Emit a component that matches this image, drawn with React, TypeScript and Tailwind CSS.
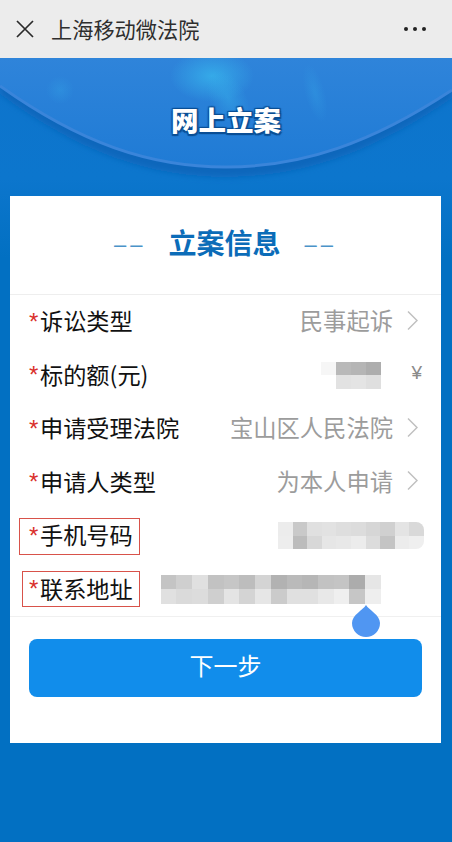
const font = "font-['Noto_Sans_CJK_SC','Noto_Sans',sans-serif]";

function Star() {
  return <span className="w-[11px] text-[#d9302c] text-[24px] leading-none font-['Liberation_Sans',sans-serif] translate-y-[1px]">*</span>;
}

function Chevron() {
  return (
    <svg width="11" height="20" viewBox="0 0 11 20" className="ml-[14px] mr-[2px] shrink-0" fill="none" stroke="#c0c0c0" strokeWidth="1.5">
      <path d="M1 1 L10 10 L1 19" />
    </svg>
  );
}

function Mosaic({ rows, className }: { rows: string[][]; className: string }) {
  return (
    <div className={"flex flex-col blur-[0.6px] " + className}>
      {rows.map((r, i) => (
        <div key={i} className="flex flex-1">
          {r.map((c, j) => (
            <div key={j} className={"flex-1 " + c} />
          ))}
        </div>
      ))}
    </div>
  );
}

function SelectRow({ label, value }: { label: string; value: string }) {
  return (
    <div className="h-[53.5px] flex items-center justify-between pl-[19px] pr-[21px]">
      <div className="flex items-center text-[#111] text-[23.2px] -translate-y-[1.5px]"><Star />{label}</div>
      <div className="flex items-center text-[#9c9c9c] text-[23.3px] -translate-y-[1.5px]">{value}<Chevron /></div>
    </div>
  );
}

export default function App() {
  return (
    <div className={"w-[452px] h-[842px] overflow-hidden flex flex-col " + font}>
      <header className="h-[58px] shrink-0 bg-[#ececec] flex items-center pl-[16px] pr-[26px]">
        <svg width="18" height="18" viewBox="0 0 18 18" fill="none" stroke="#2a2a2a" strokeWidth="1.7" className="shrink-0">
          <path d="M1 1 L17 17 M17 1 L1 17" />
        </svg>
        <div className="ml-[17px] text-[21.2px] text-[#2e2e2e] flex-1">上海移动微法院</div>
        <div className="flex gap-[5px]">
          <span className="w-[4px] h-[4px] rounded-full bg-[#222]" />
          <span className="w-[4px] h-[4px] rounded-full bg-[#222]" />
          <span className="w-[4px] h-[4px] rounded-full bg-[#222]" />
        </div>
      </header>

      <main className="relative flex-1 bg-[#0270c2] px-[10px] flex flex-col">
        <svg className="absolute left-0 top-0" width="452" height="200" viewBox="0 0 452 200">
          <defs>
            <linearGradient id="base" x1="0" y1="0" x2="0" y2="1">
              <stop offset="0" stopColor="#0e74cc" />
              <stop offset="0.6" stopColor="#0c76cd" />
              <stop offset="1" stopColor="#0270c2" />
            </linearGradient>
            <linearGradient id="dome" x1="0" y1="0" x2="0" y2="1">
              <stop offset="0" stopColor="#2f84da" />
              <stop offset="1" stopColor="#1f7bd5" />
            </linearGradient>
            <radialGradient id="glow" cx="0.5" cy="0.5" r="0.5">
              <stop offset="0" stopColor="#36aeea" stopOpacity="0.9" />
              <stop offset="1" stopColor="#36aeea" stopOpacity="0" />
            </radialGradient>
            <filter id="soft" x="-20%" y="-20%" width="140%" height="140%">
              <feGaussianBlur stdDeviation="3" />
            </filter>
          </defs>
          <rect width="452" height="200" fill="url(#base)" />
          <path d="M0 36 C80 95 150 119 226 119 C302 119 372 95 452 40 L452 0 L0 0Z" fill="#0a66bb" filter="url(#soft)" />
          <path d="M0 28 C80 85 150 109 226 109 C302 109 372 85 452 32 L452 0 L0 0Z" fill="url(#dome)" />
          <path d="M0 28 C80 85 150 109 226 109 C302 109 372 85 452 32" fill="none" stroke="#3a85da" strokeWidth="3" />
          <ellipse cx="212" cy="18" rx="42" ry="26" fill="url(#glow)" />
          <ellipse cx="228" cy="40" rx="18" ry="30" fill="url(#glow)" opacity="0.55" transform="rotate(-30 228 40)" />
          <ellipse cx="315" cy="35" rx="10" ry="30" fill="url(#glow)" opacity="0.3" transform="rotate(-15 315 35)" />
          <ellipse cx="60" cy="32" rx="14" ry="14" fill="url(#glow)" opacity="0.3" />
        </svg>

        <div className="relative h-[138px] shrink-0 flex items-center justify-center pb-[14px]">
          <span className="text-white text-[27.5px] font-black leading-none [text-shadow:0_0_2px_#0b4f95,1.5px_1.5px_1px_#0b4f95,-1px_-1px_1px_#0b4f95,1.5px_-1px_1px_#0b4f95,-1px_1.5px_1px_#0b4f95]">网上立案</span>
        </div>

        <section className="relative w-[431px] h-[547px] bg-white flex flex-col">
          <div className="h-[99px] shrink-0 border-b border-[#eeeeee] flex items-center justify-center text-[#0b6cb8]">
            <span className="text-[#4b93c9] text-[22px] leading-none tracking-[4px] font-['Liberation_Sans',sans-serif] mr-[22px]">––</span>
            <span className="text-[28px] font-bold leading-none -translate-y-[3px]">立案信息</span>
            <span className="text-[#4b93c9] text-[22px] leading-none tracking-[4px] font-['Liberation_Sans',sans-serif] ml-[24px]">––</span>
          </div>

          <SelectRow label="诉讼类型" value="民事起诉" />

          <div className="h-[53.5px] flex items-center justify-between pl-[19px] pr-[19px]">
            <div className="flex items-center text-[#111] text-[23.2px] -translate-y-[1.5px]"><Star />标的额(元)</div>
            <div className="flex items-center">
              <Mosaic
                className="w-[60px] h-[27px]"
                rows={[["bg-[#f6f6f6]", "bg-[#b9b9b9]", "bg-[#b5b5b5]", "bg-[#adadad]"], ["bg-white", "bg-[#e2e2e2]", "bg-[#e4e4e4]", "bg-[#dfdfdf]"]]}
              />
              <span className="ml-[30px] text-[#8a8a8a] text-[19px] font-['Liberation_Sans',sans-serif] -translate-y-[2px]">¥</span>
            </div>
          </div>

          <SelectRow label="申请受理法院" value="宝山区人民法院" />
          <SelectRow label="申请人类型" value="为本人申请" />

          <div className="relative h-[53.5px] flex items-center justify-between pl-[19px] pr-[17px]">
            <div className="flex items-center text-[#111] text-[23.2px] -translate-y-[1.5px]"><Star />手机号码</div>
            <Mosaic
              className="w-[146px] h-[27px] rounded-r-[8px] overflow-hidden"
              rows={[
                ["bg-[#ececec]", "bg-[#c9c9c9]", "bg-[#e0e0e0]", "bg-[#e2e2e2]", "bg-[#dedede]", "bg-[#dcdcdc]", "bg-[#d6d6d6]", "bg-[#d0d0d0]", "bg-[#e4e4e4]", "bg-[#d9d9d9]"],
                ["bg-[#ededed]", "bg-[#bcbcbc]", "bg-[#d8d8d8]", "bg-[#e6e6e6]", "bg-[#e8e8e8]", "bg-[#ececec]", "bg-[#dcdcdc]", "bg-[#c4c4c4]", "bg-[#ececec]", "bg-[#efefef]"],
              ]}
            />
            <div className="absolute left-[9px] top-[9px] w-[121px] h-[37px] border border-[#d8524a]" />
          </div>

          <div className="relative h-[53.5px] flex items-center pl-[19px]">
            <div className="flex items-center text-[#111] text-[23.2px] -translate-y-[1.5px]"><Star />联系地址</div>
            <Mosaic
              className="ml-[28px] w-[220px] h-[29px]"
              rows={[
                ["bg-[#c4c4c4]", "bg-[#cfcfcf]", "bg-[#e0e0e0]", "bg-[#c2c2c2]", "bg-[#c6c6c6]", "bg-[#bdbdbd]", "bg-[#d4d4d4]", "bg-[#b2b2b2]", "bg-[#bababa]", "bg-[#b6b6b6]", "bg-[#c2c2c2]", "bg-[#c4c4c4]", "bg-[#acacac]", "bg-[#e6e6e6]"],
                ["bg-[#e0e0e0]", "bg-[#dadada]", "bg-[#dcdcdc]", "bg-[#cfcfcf]", "bg-[#e4e4e4]", "bg-[#d4d4d4]", "bg-[#e6e6e6]", "bg-[#cbcbcb]", "bg-[#e0e0e0]", "bg-[#e0e0e0]", "bg-[#e8e8e8]", "bg-[#efefef]", "bg-[#c6c6c6]", "bg-[#eeeeee]"],
              ]}
            />
            <div className="absolute left-[12px] top-[8px] w-[118px] h-[36px] border border-[#d8524a]" />
          </div>

          <div className="border-t border-[#f0f0f0] px-[19px] pt-[22px]">
            <button className="w-[393px] h-[58px] rounded-[8px] bg-[#118deb] text-white text-[24px] flex items-center justify-center pb-[6px]">下一步</button>
          </div>

          <svg className="absolute left-[342px] top-[408px]" width="28" height="33" viewBox="0 0 28 33">
            <path d="M14 1 C17 6 28 11 28 19 A14 14 0 0 1 0 19 C0 11 11 6 14 1Z" fill="#5096f2" />
          </svg>
        </section>
      </main>
    </div>
  );
}
